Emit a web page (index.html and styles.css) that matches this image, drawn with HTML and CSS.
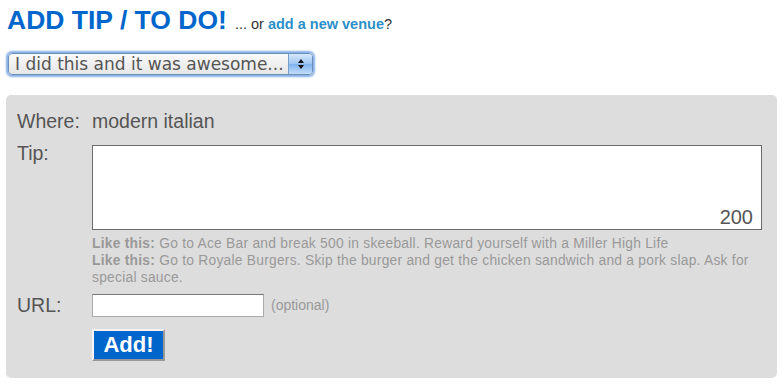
FILE: index.html
```html
<!DOCTYPE html>
<html>
<head>
<meta charset="utf-8">
<link rel="stylesheet" href="styles.css">
</head>
<body>
<div class="page">
  <div class="title-row">
    <h1 class="title">ADD TIP / TO DO!</h1>
    <span class="aside">... or <a class="venue-link" href="#">add a new venue</a>?</span>
  </div>
  <div class="select-wrap">
    <div class="select">
      <span class="select-text">I did this and it was awesome...</span>
      <span class="select-arrows">
        <svg width="8" height="12" viewBox="0 0 8 12"><path d="M4 1 L7 5 L1 5 Z" fill="#111"/><path d="M4 11 L7 7 L1 7 Z" fill="#111"/></svg>
      </span>
    </div>
  </div>
  <div class="panel">
    <div class="row where-row">
      <div class="label">Where:</div>
      <div class="value">modern italian</div>
    </div>
    <div class="row tip-row">
      <div class="label">Tip:</div>
      <div class="field">
        <div class="textarea"><span class="count">200</span></div>
        <div class="hints">
          <p class="hint"><b>Like this:</b> Go to Ace Bar and break 500 in skeeball. Reward yourself with a Miller High Life</p>
          <p class="hint"><b>Like this:</b> <span>Go to Royale Burgers. Skip the burger and get the chicken sandwich and a pork slap. Ask for</span><br><span>special sauce.</span></p>
        </div>
      </div>
    </div>
    <div class="row url-row">
      <div class="label">URL:</div>
      <div class="field url-field">
        <div class="input"></div>
        <span class="optional">(optional)</span>
      </div>
    </div>
    <div class="row btn-row">
      <div class="label"></div>
      <button class="add-btn">Add!</button>
    </div>
  </div>
</div>
</body>
</html>
```

FILE: styles.css
```css
html, body {
  margin: 0;
  padding: 0;
  background: #ffffff;
}
body {
  font-family: "Liberation Sans", Arial, sans-serif;
}
.page {
  padding: 5px 7px 0 6px;
  width: 771px;
}
.title-row {
  display: flex;
  align-items: baseline;
  padding-left: 1px;
  height: 30px;
}
.title {
  margin: 0;
  font-size: 26.5px;
  font-weight: bold;
  color: #0066cc;
  line-height: 30px;
  letter-spacing: 0;
}
.aside {
  margin-left: 8px;
  font-size: 14.5px;
  color: #333;
}
.venue-link {
  color: #2d8fc9;
  font-weight: bold;
  text-decoration: none;
}
.select-wrap {
  margin-top: 18px;
  padding-left: 2px;
  height: 26px;
}
.select {
  display: flex;
  align-items: stretch;
  width: 303px;
  height: 20px;
  margin: 2px 0;
  border: 1px solid #6c8fb8;
  border-radius: 4px;
  box-shadow: 0 0 2px 2px #86afe6;
  background: linear-gradient(#fafafa, #e6e6e6);
  overflow: hidden;
}
.select-text {
  flex: 1;
  font-family: "DejaVu Sans", sans-serif;
  font-size: 17px;
  color: #555;
  line-height: 20px;
  padding-left: 6px;
  white-space: nowrap;
  overflow: hidden;
}
.select-arrows {
  width: 23px;
  display: flex;
  align-items: center;
  justify-content: center;
  border-left: 1px solid #7aa0cc;
  background: linear-gradient(#d6e8fb, #9ec6f2 50%, #7fb3ee 51%, #c2ddf9);
}
.panel {
  margin-top: 16px;
  background: #dddddd;
  border-radius: 5px;
  padding: 14px 15px 17px 11px;
}
.row {
  display: flex;
  align-items: flex-start;
}
.label {
  width: 75px;
  font-size: 19.5px;
  color: #555;
  line-height: 24px;
}
.value {
  font-size: 19.5px;
  color: #555;
  line-height: 24px;
}
.tip-row {
  margin-top: 12px;
}
.tip-row .label {
  margin-top: -4px;
}
.field {
  flex: 1;
}
.textarea {
  height: 83px;
  background: #fff;
  border: 1px solid #6b6b6b;
  display: flex;
  align-items: flex-end;
  justify-content: flex-end;
}
.count {
  font-size: 20px;
  color: #555;
  line-height: 20px;
  padding-right: 8px;
  padding-bottom: 2px;
}
.hints {
  margin-top: 5px;
  font-size: 13.8px;
  letter-spacing: 0.25px;
  color: #999;
  line-height: 17px;
}
.hint {
  margin: 0;
}
.hint b {
  color: #999;
}
.url-row {
  margin-top: 7px;
  align-items: center;
}
.url-field {
  display: flex;
  align-items: center;
}
.input {
  width: 170px;
  height: 21px;
  background: #fff;
  border: 1px solid #aaa;
  border-top-color: #777;
}
.optional {
  margin-left: 7px;
  font-size: 14px;
  color: #999;
}
.btn-row {
  margin-top: 12px;
}
.add-btn {
  width: 73px;
  height: 32px;
  padding: 0;
  background: #0066cc;
  color: #fff;
  font-family: "Liberation Sans", Arial, sans-serif;
  font-size: 22px;
  font-weight: bold;
  border: 2px solid;
  border-color: #f4f4f4 #999 #999 #f4f4f4;
}
```
